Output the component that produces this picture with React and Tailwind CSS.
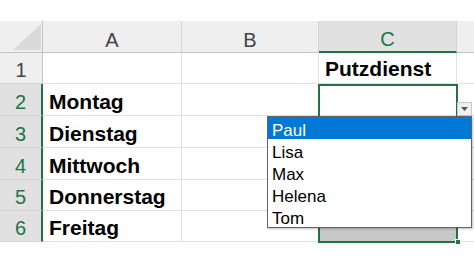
const rows = [
  { n: 1, a: "", c: "Putzdienst", h: "h-[31px]" },
  { n: 2, a: "Montag", c: "", h: "h-[32px]" },
  { n: 3, a: "Dienstag", c: "", h: "h-[32px]" },
  { n: 4, a: "Mittwoch", c: "", h: "h-[32px]" },
  { n: 5, a: "Donnerstag", c: "", h: "h-[31px]" },
  { n: 6, a: "Freitag", c: "", h: "h-[31px]" },
];

const names = ["Paul", "Lisa", "Max", "Helena", "Tom"];

function ColHeader({ label, width, selected }) {
  return (
    <div
      className={`${width} shrink-0 flex items-end justify-center pb-[2px] leading-none text-[20px] border-r border-[#d4d4d4] ${
        selected
          ? "bg-[#e1e1e1] text-[#217346] border-b-2 border-b-[#217346]"
          : "bg-[#efefef] text-[#444] border-b border-b-[#c4c4c4]"
      }`}
    >
      {label}
    </div>
  );
}

export default function App() {
  return (
    <div
      className="relative w-[474px] h-[266px] overflow-hidden bg-white pt-[21px]"
      style={{ fontFamily: '"Liberation Sans", Arial, sans-serif' }}
    >
      {/* column headers */}
      <div className="flex h-[32px]">
        <div className="w-[43px] shrink-0 bg-[#efefef] border-r border-b border-[#c4c4c4] flex items-end justify-end pr-[1px] pb-[2px]">
          <svg width="28" height="26" viewBox="0 0 28 26">
            <polygon points="28,0 28,26 0,26" fill="#dadada" />
          </svg>
        </div>
        <ColHeader label="A" width="w-[139px]" />
        <ColHeader label="B" width="w-[137px]" />
        <ColHeader label="C" width="w-[138px]" selected />
        <ColHeader label="" width="w-[40px]" />
      </div>

      {rows.map((r) => {
        const sel = r.n >= 2;
        return (
          <div key={r.n} className={`flex ${r.h}`}>
            <div
              className={`w-[43px] shrink-0 flex items-end justify-center pb-[3px] leading-none text-[20px] border-b border-[#d4d4d4] ${
                sel
                  ? "bg-[#e1e1e1] text-[#217346] border-r-2 border-r-[#217346]"
                  : "bg-[#efefef] text-[#444] border-r border-r-[#c4c4c4]"
              }`}
            >
              {r.n}
            </div>
            <div className="w-[139px] shrink-0 flex items-end pl-[6px] pb-[3px] leading-none text-[21px] font-bold text-black border-r border-b border-[#e1e1e1]">
              {r.a}
            </div>
            <div className="w-[137px] shrink-0 border-r border-b border-[#e1e1e1]" />
            <div
              className={`w-[138px] shrink-0 flex items-end pl-[6px] pb-[4px] leading-none text-[21px] font-bold text-black border-r border-b border-[#e1e1e1] ${
                r.n >= 3 ? "bg-[#c8c8c8]" : ""
              }`}
            >
              {r.c}
            </div>
            <div className="w-[40px] shrink-0 border-b border-[#e1e1e1]" />
          </div>
        );
      })}

      {/* selection outline C2:C6 */}
      <div className="absolute left-[318px] top-[84px] w-[140px] h-[159px] border-2 border-[#217346]" />
      <div className="absolute left-[320px] top-[86px] w-[136px] h-[29px] bg-white" />
      <div className="absolute left-[455px] top-[239px] w-[6px] h-[6px] bg-[#217346] border border-white" />

      {/* dropdown arrow */}
      <div className="absolute left-[457px] top-[102px] w-[15px] h-[14px] bg-[#f0f0f0] border border-[#c8c8c8] flex items-center justify-center">
        <svg width="7" height="4" viewBox="0 0 7 4">
          <polygon points="0,0 7,0 3.5,4" fill="#555" />
        </svg>
      </div>

      {/* dropdown list */}
      <div className="absolute left-[267px] top-[116px] w-[205px] h-[112px] bg-white border border-[#646464] shadow-[1px_1px_2px_rgba(0,0,0,0.25)]">
        {names.map((n, i) => (
          <div
            key={n}
            className={`h-[22px] flex items-end pl-[4px] leading-none text-[17px] ${
              i === 0 ? "bg-[#0078d7] text-white" : "text-black"
            }`}
          >
            {n}
          </div>
        ))}
      </div>
    </div>
  );
}
